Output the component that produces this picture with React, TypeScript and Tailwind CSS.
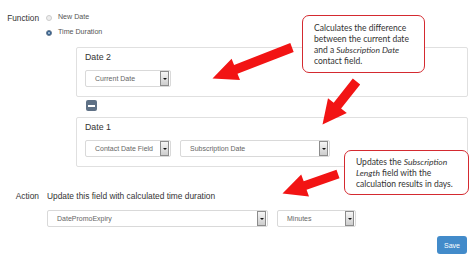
import React from 'react';

type Pt = [number, number];

// builds an arrow polygon from tip to tail
const arrowPoints = (tip: Pt, tail: Pt, headLen: number, headW: number, shaftW: number) => {
  const dx = tail[0] - tip[0];
  const dy = tail[1] - tip[1];
  const len = Math.hypot(dx, dy);
  const ux = dx / len;
  const uy = dy / len;
  const px = -uy;
  const py = ux;
  const bx = tip[0] + ux * headLen;
  const by = tip[1] + uy * headLen;
  const pts: Pt[] = [
    tip,
    [bx + px * headW / 2, by + py * headW / 2],
    [bx + px * shaftW / 2, by + py * shaftW / 2],
    [tail[0] + px * shaftW / 2, tail[1] + py * shaftW / 2],
    [tail[0] - px * shaftW / 2, tail[1] - py * shaftW / 2],
    [bx - px * shaftW / 2, by - py * shaftW / 2],
    [bx - px * headW / 2, by - py * headW / 2],
  ];
  return pts.map(p => `${p[0].toFixed(1)},${p[1].toFixed(1)}`).join(' ');
};

const arrows = [
  { tip: [212.5, 78.5] as Pt, tail: [292, 47.5] as Pt, head: 25, hw: 23, sw: 9.5 },
  { tip: [322.5, 124.5] as Pt, tail: [356.5, 81.5] as Pt, head: 24, hw: 24, sw: 9.5 },
  { tip: [282.5, 193.5] as Pt, tail: [338, 174] as Pt, head: 24, hw: 23.5, sw: 9 },
];

const Select = ({ label, className }: { label: string; className: string }) => (
  <div className={`flex h-[17px] items-center justify-between rounded-[2px] border border-[#d9d9d9] bg-white pl-[9px] pr-[1px] ${className}`}>
    <span className="text-[7px] leading-none text-[#666]">{label}</span>
    <div className="flex h-[15px] w-[9px] items-center justify-center border border-[#8c8c8c] bg-gradient-to-b from-[#f6f6f6] to-[#cdcdcd]">
      <div className="h-0 w-0 border-x-[2px] border-t-[2.5px] border-x-transparent border-t-[#111]" />
    </div>
  </div>
);

const Radio = ({ checked, label }: { checked?: boolean; label: string }) => (
  <div className="flex h-[14px] items-center gap-[6px]">
    {checked ? (
      <div className="flex h-[6px] w-[6px] items-center justify-center rounded-full border border-[#6b7c90] bg-[#2f5f8f]">
        <div className="h-[2px] w-[2px] rounded-full bg-[#b8cde0]" />
      </div>
    ) : (
      <div className="h-[6px] w-[6px] rounded-full border border-[#cccccc] bg-[#eeeeee]" />
    )}
    <span className="text-[7.1px] leading-none text-[#555]">{label}</span>
  </div>
);

const Panel = ({ title, children }: { title: string; children: React.ReactNode }) => (
  <div className="ml-[30px] h-[50px] w-[392px] rounded-[2px] border border-[#e0e0e0] bg-white pl-[8px] pt-[3px]">
    <div className="h-[12px] text-[8.8px] leading-[12px] text-[#333]">{title}</div>
    <div className="mt-[7px] flex gap-[9px]">{children}</div>
  </div>
);

export default function App() {
  return (
    <div className="relative h-[257px] w-[474px] overflow-hidden bg-white font-['Liberation_Sans',Arial,sans-serif]">
      <div className="flex pt-[11px]">
        <div className="w-[39px] text-right text-[8.3px] leading-[14px] text-[#333]">Function</div>
        <div className="ml-[7px] flex flex-col">
          <Radio label="New Date" />
          <div className="mt-[1px]">
            <Radio checked label="Time Duration" />
          </div>
          <div className="mt-[7px]">
            <Panel title="Date 2">
              <Select label="Current Date" className="w-[86px]" />
            </Panel>
          </div>
          <div className="ml-[40px] mt-[3px] flex h-[11px] w-[11px] items-center justify-center rounded-[2px] bg-[#5f7186]">
            <div className="h-[2px] w-[7px] bg-white" />
          </div>
          <div className="mt-[6px]">
            <Panel title="Date 1">
              <Select label="Contact Date Field" className="w-[86px]" />
              <Select label="Subscription Date" className="w-[150px]" />
            </Panel>
          </div>
        </div>
      </div>

      <div className="mt-[22px] flex">
        <div className="w-[39px] text-right text-[8.4px] leading-[14px] text-[#333]">Action</div>
        <div className="ml-[8px] flex w-[420px] flex-col">
          <div className="text-[8.4px] leading-[14px] text-[#333]">Update this field with calculated time duration</div>
          <div className="mt-[7px] flex gap-[9px]">
            <Select label="DatePromoExpiry" className="w-[221px]" />
            <Select label="Minutes" className="w-[79px]" />
          </div>
          <div className="mt-[9px] flex justify-end">
            <button className="h-[18px] w-[30px] rounded-[3px] bg-[#428bca] text-[7px] leading-none text-white">Save</button>
          </div>
        </div>
      </div>

      <svg className="pointer-events-none absolute left-0 top-0" width="474" height="257" viewBox="0 0 474 257">
        {arrows.map((a, i) => (
          <polygon key={i} points={arrowPoints(a.tip, a.tail, a.head, a.hw, a.sw)} fill="#f21414" />
        ))}
      </svg>

      <div className="absolute left-[302px] top-[15px] h-[58px] w-[123px] rounded-[7px] border-[1.5px] border-[#d42a30] bg-white pl-[11px] pt-[7px] font-['Lato',sans-serif] text-[8.5px] leading-[11px] text-[#333]">
        Calculates the difference<br />
        between the current date<br />
        and a <i>Subscription Date</i><br />
        contact field.
      </div>

      <div className="absolute left-[344px] top-[150px] h-[45px] w-[125px] rounded-[7px] border-[1.5px] border-[#d42a30] bg-white pl-[11px] pt-[6px] font-['Lato',sans-serif] text-[8.5px] leading-[11px] text-[#333]">
        Updates the <i>Subscription</i><br />
        <i>Length</i> field with the<br />
        calculation results in days.
      </div>
    </div>
  );
}
